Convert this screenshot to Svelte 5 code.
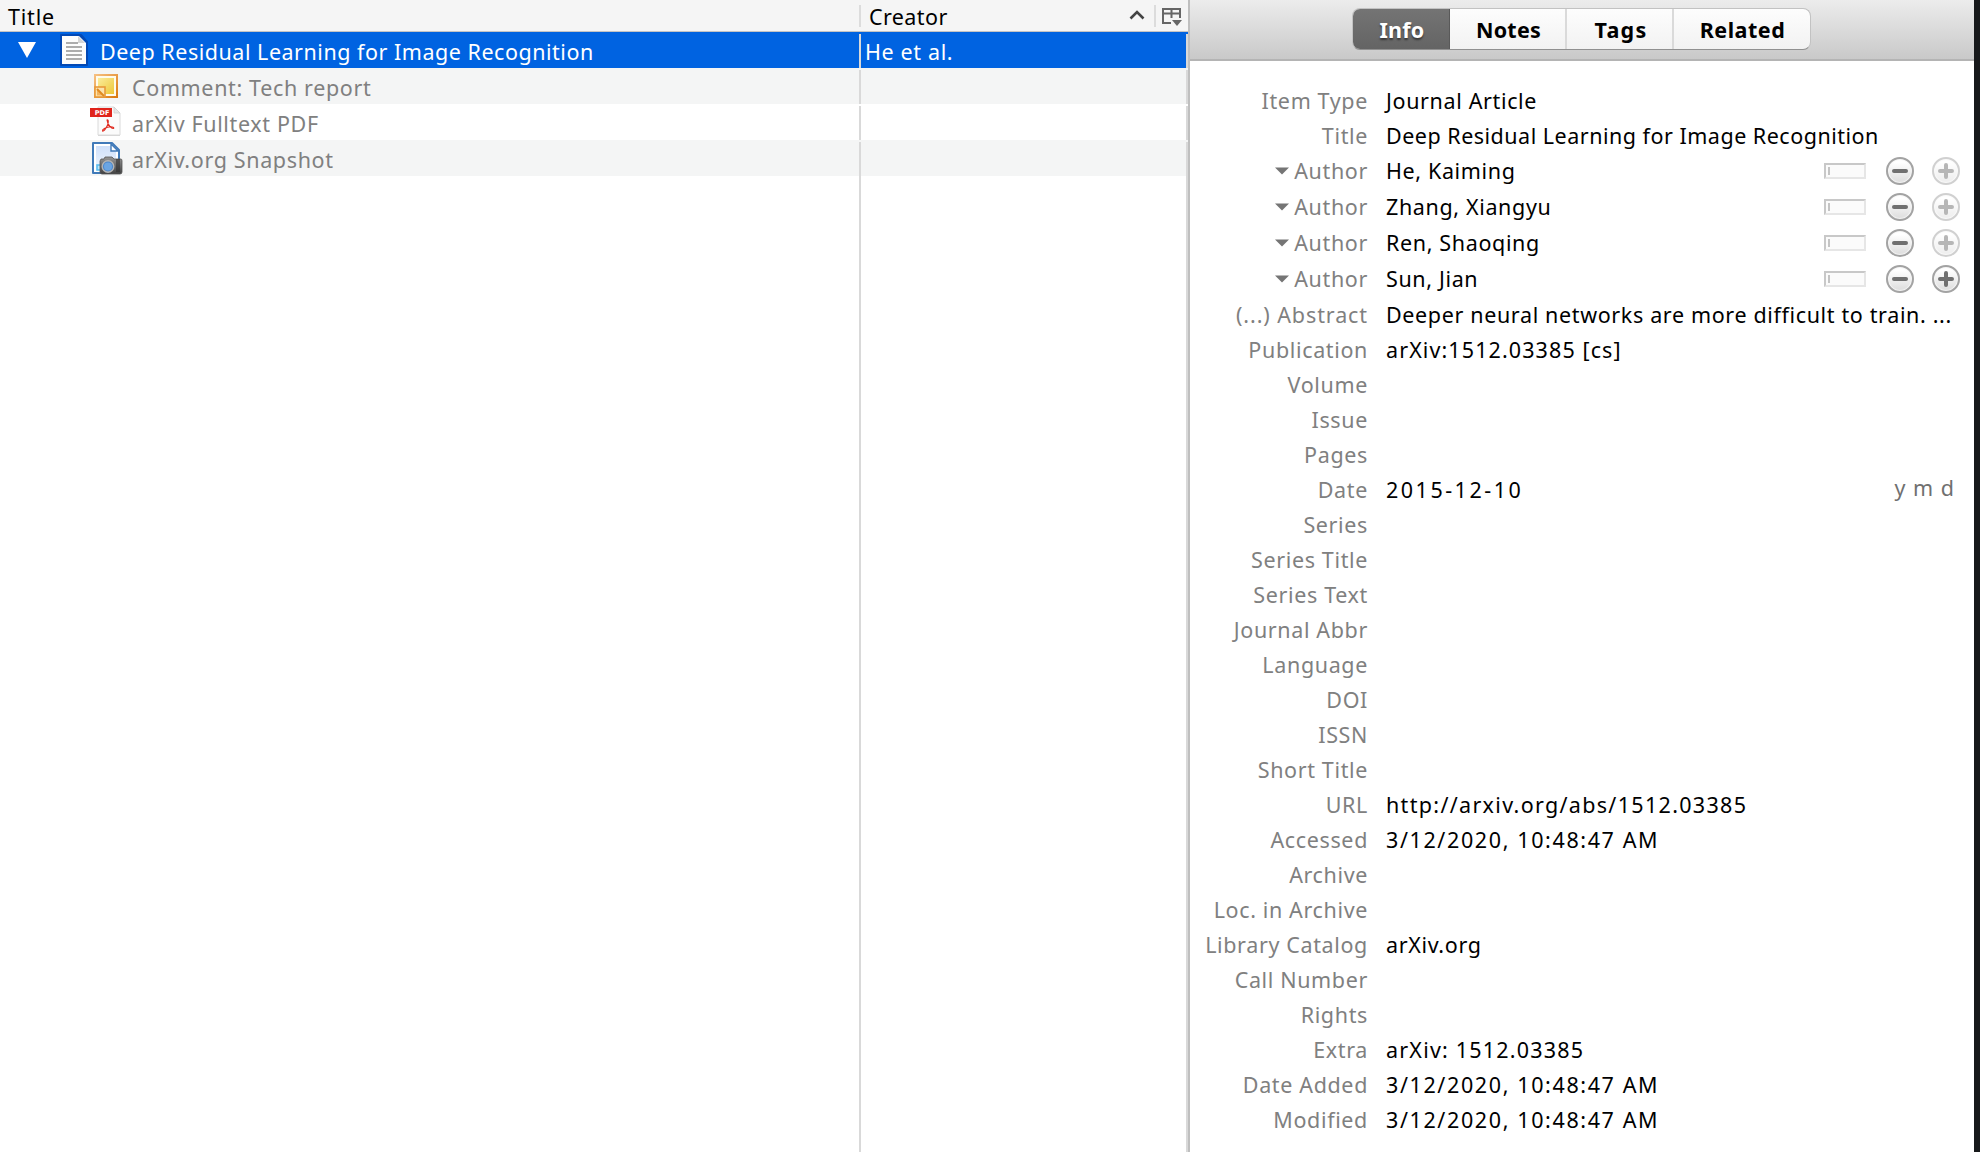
<script lang="ts">
  type Field = {
    label: string;
    value?: string;
    creator?: boolean;
    canAdd?: boolean;
    wide?: boolean;
    hint?: string;
    spacing?: number;
  };

  const tabs = ['Info', 'Notes', 'Tags', 'Related'];
  let activeTab = $state('Info');

  const children = [
    { kind: 'note', title: 'Comment: Tech report' },
    { kind: 'pdf', title: 'arXiv Fulltext PDF' },
    { kind: 'snapshot', title: 'arXiv.org Snapshot' },
  ];

  const fields: Field[] = [
    { label: 'Item Type', value: 'Journal Article' },
    { label: 'Title', value: 'Deep Residual Learning for Image Recognition', spacing: 0.5 },
    { label: 'Author', value: 'He, Kaiming', creator: true },
    { label: 'Author', value: 'Zhang, Xiangyu', creator: true },
    { label: 'Author', value: 'Ren, Shaoqing', creator: true },
    { label: 'Author', value: 'Sun, Jian', creator: true, canAdd: true },
    { label: '(...) Abstract', value: 'Deeper neural networks are more difficult to train. ...', wide: true },
    { label: 'Publication', value: 'arXiv:1512.03385 [cs]', spacing: 1.1 },
    { label: 'Volume' },
    { label: 'Issue' },
    { label: 'Pages' },
    { label: 'Date', value: '2015-12-10', hint: 'y m d', spacing: 2.5 },
    { label: 'Series' },
    { label: 'Series Title' },
    { label: 'Series Text' },
    { label: 'Journal Abbr' },
    { label: 'Language' },
    { label: 'DOI' },
    { label: 'ISSN' },
    { label: 'Short Title' },
    { label: 'URL', value: 'http://arxiv.org/abs/1512.03385', spacing: 1.32 },
    { label: 'Accessed', value: '3/12/2020, 10:48:47 AM', spacing: 1.62 },
    { label: 'Archive' },
    { label: 'Loc. in Archive' },
    { label: 'Library Catalog', value: 'arXiv.org' },
    { label: 'Call Number' },
    { label: 'Rights' },
    { label: 'Extra', value: 'arXiv: 1512.03385', spacing: 1.2 },
    { label: 'Date Added', value: '3/12/2020, 10:48:47 AM', spacing: 1.62 },
    { label: 'Modified', value: '3/12/2020, 10:48:47 AM', spacing: 1.62 },
  ];
</script>

<div class="window">
  <section class="items">
    <header class="columns">
      <div class="col-title">Title</div>
      <div class="col-creator">
        <span>Creator</span>
        <svg class="sort" width="16" height="10" viewBox="0 0 16 10">
          <path d="M1.5 8.5 L8 2 L14.5 8.5" fill="none" stroke="#444" stroke-width="2.6" />
        </svg>
      </div>
      <div class="picker">
        <svg width="22" height="20" viewBox="0 0 22 20">
          <path d="M9 16 H1 V2 H18 V11 M1 6.5 H18 M9.5 2 V11" fill="none" stroke="#666" stroke-width="2" />
          <path d="M10 13 H20 L15 19 Z" fill="#666" />
        </svg>
      </div>
    </header>

    <div class="row selected">
      <div class="cell-title">
        <svg class="twisty" width="18" height="16" viewBox="0 0 18 16"><path d="M0 0 H18 L9 16 Z" fill="#fff" /></svg>
        <svg class="doc" width="28" height="32" viewBox="0 0 28 32">
          <path d="M1 1 H21 L27 8 V31 H1 Z" fill="#0349b5" stroke="#0349b5" stroke-width="2" stroke-linejoin="round" />
          <path d="M2 2 H19 L26 9 V30 H2 Z" fill="#fdfdfd" />
          <path d="M18 2 V9 H25 Z" fill="#d5d5d5" />
          <path d="M6 9 H18 M6 13 H22 M6 17 H22 M6 21 H22 M6 25 H22" stroke="#adadad" stroke-width="1.8" />
        </svg>
        <span>Deep Residual Learning for Image Recognition</span>
      </div>
      <div class="cell-creator"><span>He et al.</span></div>
    </div>

    {#each children as child}
      <div class="row child">
        <div class="cell-title">
          <svg class="kind" width="34" height="34" viewBox="0 0 34 34">
            {#if child.kind === 'note'}
              <defs>
                <linearGradient id="noteEdge" x1="0" y1="0" x2="1" y2="1">
                  <stop offset="0" stop-color="#f6bf80" /><stop offset="1" stop-color="#dc7a10" />
                </linearGradient>
                <linearGradient id="noteFill" x1="0" y1="0" x2="1" y2="1">
                  <stop offset="0" stop-color="#fbec9c" /><stop offset="1" stop-color="#edc838" />
                </linearGradient>
              </defs>
              <rect x="5" y="6" width="22" height="22" fill="#fffbea" stroke="url(#noteEdge)" stroke-width="2" />
              <rect x="8" y="9" width="16" height="16" fill="url(#noteFill)" />
              <rect x="5" y="18" width="10" height="10" fill="#fbe3ae" stroke="#e89a3a" stroke-width="1.6" />
              <path d="M7 20 V26.5 L13.5 26.5 Z" fill="#f3b45c" />
              <path d="M7 20 L14 27" stroke="#e08a20" stroke-width="2" />
            {:else if child.kind === 'pdf'}
              <path d="M8 3 H24 L30 9 V31 H8 Z" fill="#c9c9c9" opacity=".8" />
              <path d="M8 2 H24 L30 8 V30 H8 Z" fill="#fbfbfb" stroke="#dadada" stroke-width="1" />
              <path d="M24 2 V8 H30 Z" fill="#e6e6e6" stroke="#cfcfcf" stroke-width=".8" />
              <rect x="0" y="3" width="22" height="9" fill="#e0231b" />
              <text x="4.8" y="10" class="pdf-tag">PDF</text>
              <path d="M17 15 C19 14 18.5 19 16.8 21.5 C15.5 24 13.5 26.5 12.5 26 C12 24.5 16 22.3 19 22 C21.5 21.7 24 22 23.7 23.3 C22 24.3 17.5 20 17 15 Z" fill="none" stroke="#e02b20" stroke-width="1.1" />
            {:else}
              <defs>
                <linearGradient id="pageFill" x1="0" y1="0" x2="0" y2="1">
                  <stop offset="0" stop-color="#cfe0fa" /><stop offset="1" stop-color="#f0f6fe" />
                </linearGradient>
                <linearGradient id="cameraBody" x1="0" y1="0" x2="0" y2="1">
                  <stop offset="0" stop-color="#969696" /><stop offset="1" stop-color="#404040" />
                </linearGradient>
              </defs>
              <path d="M3 2 H22 L29 9 V32 H3 Z" fill="#fff" stroke="#407ab9" stroke-width="2" stroke-linejoin="round" />
              <path d="M6 5 H20 L26 11 V29 H6 Z" fill="url(#pageFill)" />
              <path d="M21 3 V10 H28 Z" fill="#fff" stroke="#407ab9" stroke-width="1.4" />
              <rect x="7" y="24" width="5" height="5" fill="#b9e6fb" stroke="#5bbdf0" stroke-width="1.6" />
              <path d="M11 18 H14 L15 16 H22 L24 18 H31 Q32 18 32 20 V31 Q32 33 30 33 H12 Q10 33 10 31 V20 Z" fill="url(#cameraBody)" stroke="#555" stroke-width=".8" />
              <rect x="26" y="18" width="4" height="13" fill="#303030" opacity=".6" />
              <circle cx="18" cy="25.5" r="5.8" fill="#4b87cb" stroke="#b4b4b4" stroke-width="1.4" />
              <circle cx="18" cy="25.5" r="4" fill="#6ba5e2" />
            {/if}
          </svg>
          <span>{child.title}</span>
        </div>
        <div class="cell-creator"></div>
      </div>
    {/each}

    <div class="empty">
      <div class="cell-title"></div>
      <div class="cell-creator"></div>
    </div>
  </section>

  <section class="details">
    <nav class="toolbar">
      <div class="tabs">
        {#each tabs as tab}
          <button type="button" class={tab.toLowerCase()} class:active={tab === activeTab} onclick={() => (activeTab = tab)}>{tab}</button>
        {/each}
      </div>
    </nav>

    <div class="fields">
      {#each fields as field}
        <div class="field" class:creator={field.creator}>
          <div class="label">
            {#if field.creator}
              <svg width="14" height="8" viewBox="0 0 14 8"><path d="M0 0.5 H14 L7 7.5 Z" fill="#757575" /></svg>
            {/if}
            <span class:wide={field.wide}>{field.label}</span>
          </div>
          <div class="value" style:letter-spacing={field.spacing ? `${field.spacing}px` : null}>{field.value ?? ''}</div>
          {#if field.creator}
            <div class="controls">
              <div class="mode"><i></i></div>
              <button type="button" class="round" aria-label="Remove author">
                <svg width="28" height="28" viewBox="0 0 28 28"><path d="M8 14 H20" /></svg>
              </button>
              <button type="button" class="round" aria-label="Add author" disabled={!field.canAdd}>
                <svg width="28" height="28" viewBox="0 0 28 28"><path d="M8 14 H20 M14 8 V20" /></svg>
              </button>
            </div>
          {/if}
          {#if field.hint}
            <div class="hint">{field.hint}</div>
          {/if}
        </div>
      {/each}
    </div>
  </section>

  <div class="edge"></div>
</div>

<style>
  :global(body) {
    overflow: hidden;
  }

  .window {
    display: flex;
    width: 1980px;
    height: 1152px;
    background: #fff;
    font-family: 'Lucida Grande', 'Noto Sans', sans-serif;
    font-size: 21.5px;
    line-height: 30px;
    letter-spacing: 0.64px;
    color: #000;
    white-space: nowrap;
  }

  .items {
    display: flex;
    flex-direction: column;
    width: 1188px;
    border-right: 2px solid #bfbfbf;
  }

  .columns {
    display: flex;
    align-items: center;
    height: 31px;
    border-bottom: 1px solid #c4c4c4;
    background: #f5f5f5;
    letter-spacing: 0.4px;
  }

  .col-title {
    width: 851px;
    padding: 2px 0 0 8px;
    letter-spacing: 0.8px;
  }

  .col-creator,
  .picker {
    display: flex;
    align-items: center;
    height: 22px;
    border-left: 2px solid #dcdcdc;
  }

  .col-creator {
    width: 293px;
  }

  .col-creator span {
    flex: 1;
    padding: 3px 0 0 8px;
  }

  .sort {
    margin: 0 9px 2px 0;
  }

  .picker {
    padding-left: 6px;
  }

  .picker svg {
    margin-top: 2px;
  }

  .row {
    display: flex;
    height: 36px;
  }

  .cell-title {
    display: flex;
    align-items: center;
    width: 859px;
  }

  .cell-creator {
    flex: 1;
    border: solid #d9d9d9;
    border-width: 0 2px;
  }

  .row .cell-creator {
    margin-top: 2px;
    padding-left: 4px;
  }

  .row:nth-child(odd) {
    background: #f4f5f5;
  }

  .row.selected {
    background: #0063e1;
    color: #fff;
  }

  .row span {
    padding-top: 3px;
  }

  .cell-creator span {
    display: block;
  }

  .selected .cell-title span {
    letter-spacing: 0.52px;
  }

  .twisty {
    margin: 0 24px 0 18px;
  }

  .doc {
    margin-right: 12px;
  }

  .child {
    color: #808080;
  }

  .kind {
    margin: 0 8px 0 90px;
  }

  .pdf-tag {
    font: bold 6.5px 'DejaVu Sans', sans-serif;
    letter-spacing: 0;
    fill: #fff;
  }

  .empty {
    display: flex;
    flex: 1;
  }

  .details {
    width: 784px;
  }

  .toolbar {
    box-sizing: border-box;
    height: 61px;
    padding: 8px 0 0 162px;
    border-bottom: 2px solid #b4b4b4;
    background: linear-gradient(#ececec, #c9c9c9);
  }

  .tabs {
    display: flex;
    box-sizing: border-box;
    width: 459px;
    height: 42px;
    border: 1px solid #c2c2c2;
    border-bottom-color: #909090;
    border-radius: 8px;
    background: linear-gradient(#fdfdfd, #f2f2f2);
    overflow: hidden;
  }

  .tabs button {
    padding: 1px 0 0;
    border: 0;
    border-right: 2px solid #dadada;
    background: none;
    font: bold 21.5px/40px 'Lucida Grande', 'Noto Sans', sans-serif;
    letter-spacing: 0.2px;
    color: #000;
  }

  .tabs .info {
    width: 97px;
    padding-left: 2px;
  }

  .tabs .notes {
    width: 117px;
    padding-left: 2px;
  }

  .tabs .tags {
    width: 107px;
    padding-left: 3px;
    letter-spacing: 1.3px;
  }

  .tabs .related {
    flex: 1;
    padding-left: 1px;
    border-right: 0;
    letter-spacing: 0.5px;
  }

  .tabs .active {
    border-right: 1px solid #595959;
    background: linear-gradient(#747474, #646464);
    color: #fff;
    text-shadow: 0 2px 2px rgba(0, 0, 0, 0.5);
  }

  .fields {
    padding-top: 22px;
  }

  .field {
    display: flex;
    align-items: center;
    height: 35px;
  }

  .field.creator {
    height: 36px;
  }

  .label {
    display: flex;
    flex: none;
    align-items: center;
    justify-content: flex-end;
    gap: 5px;
    width: 178px;
    margin-right: 18px;
    color: #808080;
  }

  .label .wide {
    letter-spacing: 0.9px;
  }

  .value {
    flex: 1;
  }

  .controls {
    display: flex;
    align-items: center;
    margin-right: 14px;
  }

  .mode {
    box-sizing: border-box;
    width: 42px;
    height: 16px;
    margin-right: 20px;
    padding: 2px;
    border: 2px solid #e6e6e6;
    border-top-color: #c8c8c8;
    border-left-color: #c8c8c8;
    background: #fbfbfb;
  }

  .mode i {
    display: block;
    width: 2px;
    height: 8px;
    background: #c4c4c4;
  }

  .round {
    box-sizing: border-box;
    display: flex;
    align-items: center;
    justify-content: center;
    width: 28px;
    height: 28px;
    padding: 0;
    border: 2px solid #a3a3a3;
    border-radius: 50%;
    background: linear-gradient(#fff 15%, #dcdcdc);
    box-shadow: inset 0 0 1px 1px #f5f5f5;
  }

  .round + .round {
    margin-left: 18px;
  }

  .round:disabled {
    opacity: 0.5;
  }

  .round svg {
    flex: none;
  }

  .round path {
    stroke: #707070;
    stroke-width: 4;
    stroke-linecap: round;
  }

  .hint {
    margin: 0 19px 3px 0;
    letter-spacing: 1px;
    color: #707070;
  }

  .edge {
    width: 6px;
    background: #17191b;
  }
</style>
